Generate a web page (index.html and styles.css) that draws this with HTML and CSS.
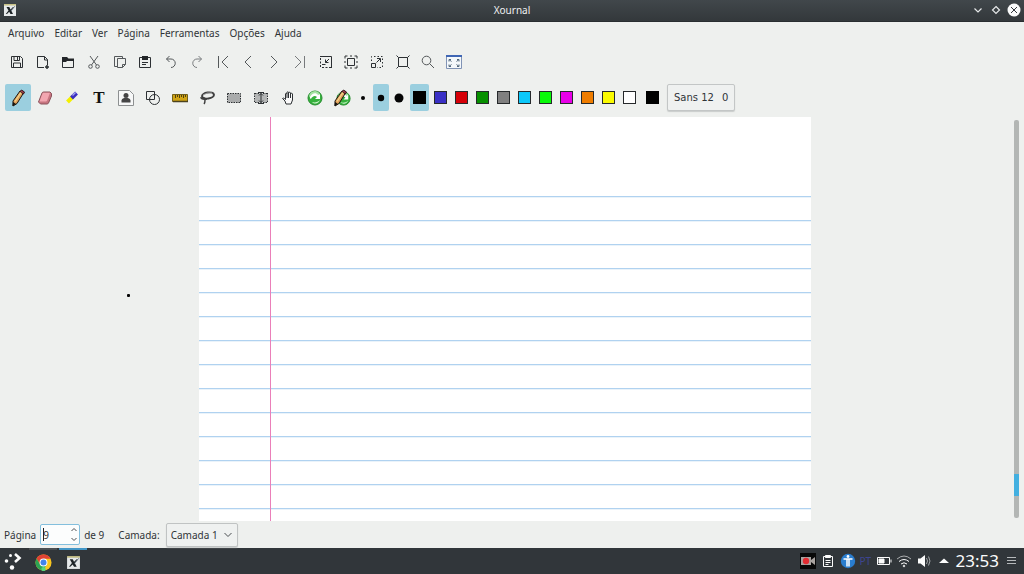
FILE: index.html
```html
<!DOCTYPE html>
<html lang="pt">
<head>
<meta charset="utf-8">
<title>Xournal</title>
<link rel="stylesheet" href="styles.css">
</head>
<body>
<svg class="defs" aria-hidden="true">
  <symbol id="xlogo" viewBox="0 0 14 14"><path d="M1 2h12v11H1z" fill="#e6e9ea"/><path d="M1 1h12v1.500H1z" fill="#c9c388"/><path d="M3.500 4h2.800l1.200 2.400L10 4h1.200L8.200 7.500 10 11H7.500L6.200 8.800 4 11H2.800l2.700-3.500z" fill="#1d2326"/><path d="M8 8l4-5" stroke="#6d7a86" stroke-width=".8"/></symbol>
  <symbol id="pencil" viewBox="0 0 18 18"><path d="M4 12L11 2l3.500 2L8 14.500 4 17z" fill="#dfa15b" stroke="#1c1510"/><path d="M11 2.500l1.500-1.500 3 2-1 2z" fill="#a84350" stroke="#30151a"/><path d="M6 12.500L12 3.500" stroke="#f6d88f" stroke-width="1.200"/><path d="M4 13l3 2-3.500 2z" fill="#17130f"/></symbol>
  <symbol id="green" viewBox="0 0 18 18"><circle cx="9" cy="9" r="7" fill="#35b13c" stroke="#278c30"/><path d="M3 7a6 6 0 0 1 11-2l-3 2-3-1-3 4z" fill="#a6e3a3"/><path d="M4 8c2-4 6-5 8-2l2-1v5H9l2-2C9 6 7 7 4 10z" fill="#fff"/><path d="M6 13c3 1 6 0 8-2-1 3-5 5-8 2z" fill="#d5f5d3"/></symbol>
</svg>

<header class="titlebar">
  <svg class="logo"><use href="#xlogo"/></svg>
  <h1>Xournal</h1>
  <div class="winbuttons">
    <button aria-label="Minimizar"><svg viewBox="0 0 14 14"><path d="M3.500 5.500L7 9l3.500-3.500" class="light"/></svg></button>
    <button aria-label="Maximizar"><svg viewBox="0 0 14 14"><path d="M7 3.500L10.500 7 7 10.500 3.500 7z" class="light"/></svg></button>
    <button aria-label="Fechar"><svg viewBox="0 0 14 14"><circle cx="7" cy="7" r="6.500" fill="#fbfcfc"/><path d="M4 4l6 6M10 4l-6 6" stroke="#31363b" fill="none"/></svg></button>
  </div>
</header>

<nav class="menubar">
  <button>Arquivo</button><button>Editar</button><button>Ver</button><button>Página</button><button>Ferramentas</button><button>Opções</button><button>Ajuda</button>
</nav>

<div class="toolbar main" role="toolbar" aria-label="Principal">
  <button aria-label="Salvar"><svg viewBox="0 0 16 16"><path d="M2.500 2.500h9l2 2v9h-11zM5 2.500v4h5.500v-4M4.500 13.500V9h7v4.500M8.500 3v3"/></svg></button>
  <button aria-label="Novo"><svg viewBox="0 0 16 16"><path d="M9 13.500H2.500v-11h7l3 3V11M9.500 2.500v3.500h3"/><path d="M10 13h4M12 11v4" stroke-width="1.500"/></svg></button>
  <button aria-label="Abrir"><svg viewBox="0 0 16 16"><path d="M2.500 3.500h4l2 2h5v8h-11z"/><path d="M2 3h5l1.500 1.500H14V7H7L6 8H2z" class="solid"/></svg></button>
  <button aria-label="Recortar"><svg viewBox="0 0 16 16" class="thin"><path d="M4 2l6.500 9M12 2l-6.500 9"/><circle cx="4.500" cy="12.500" r="1.800"/><circle cx="11.500" cy="12.500" r="1.800"/></svg></button>
  <button aria-label="Copiar"><svg viewBox="0 0 16 16" class="thin"><path d="M5 12.500H2.500v-10h8v2M5.500 4.500h8v6l-3 3h-5zM13.500 10.500h-3v3"/></svg></button>
  <button aria-label="Colar"><svg viewBox="0 0 16 16"><path d="M2.500 3.500h11v10h-11zM5 8.500h6M5 10.500h4"/><path d="M5 2h6v4H5z" class="solid"/></svg></button>
  <button aria-label="Desfazer"><svg viewBox="0 0 16 16" class="thin"><path d="M6.500 2L3.500 5l3 3M3.500 5H8a4.200 4.200 0 0 1 0 8.500"/></svg></button>
  <button aria-label="Refazer"><svg viewBox="0 0 16 16" class="thin"><path d="M9.500 2l3 3-3 3M12.500 5H8a4.200 4.200 0 0 0 0 8.500" stroke="#7b7e80"/></svg></button>
  <button aria-label="Primeira página"><svg viewBox="0 0 16 16" class="thin"><path d="M3.500 2v12M13 2L7 8l6 6"/></svg></button>
  <button aria-label="Página anterior"><svg viewBox="0 0 16 16" class="thin"><path d="M11 2L5 8l6 6"/></svg></button>
  <button aria-label="Próxima página"><svg viewBox="0 0 16 16" class="thin"><path d="M5 2l6 6-6 6"/></svg></button>
  <button aria-label="Última página"><svg viewBox="0 0 16 16" class="thin"><path d="M12.500 2v12M3 2l6 6-6 6" stroke="#777a7c"/></svg></button>
  <button aria-label="Reduzir"><svg viewBox="0 0 16 16"><path d="M2 2.500h11.500V14"/><path d="M2.500 4v9.500M4 13.500h9" stroke-dasharray="2 1.500"/><path d="M11 5L7.500 8.500M7.500 5.500v3h3M4 10.500h3.500"/></svg></button>
  <button aria-label="Largura da página"><svg viewBox="0 0 16 16"><path d="M4.500 4.500h7v7h-7z"/><path d="M2 4.500V2h2.500M7 2h2M11.500 2H14v2.500M14 7v2M14 11.500V14h-2.500M9 14H7M4.500 14H2v-2.500M2 9V7"/></svg></button>
  <button aria-label="Ampliar"><svg viewBox="0 0 16 16"><path d="M2.500 9.500h4v4h-4z"/><path d="M2.500 7V2.500h11v11H8" stroke-dasharray="1.500 2"/><path d="M7.500 8.500L11 5M8 4.500h3.500V8"/></svg></button>
  <button aria-label="Ajustar"><svg viewBox="0 0 16 16"><path d="M3.500 3.500h9v9h-9zM1.500 1.500l2 2M14.500 1.500l-2 2M1.500 14.500l2-2M14.500 14.500l-2-2"/></svg></button>
  <button aria-label="Zoom"><svg viewBox="0 0 16 16" class="thin"><circle cx="6.500" cy="6.500" r="4.300"/><path d="M9.500 9.500L14 14"/></svg></button>
  <button aria-label="Tela cheia"><svg viewBox="0 0 18 16" class="wide"><path d="M1.500 1.500h15v13h-15z" fill="#f4f8fb" stroke="#8093b5"/><path d="M1 1h16v2H1z" fill="#3f66b4"/><path d="M4 5.500l2.500 2M4 5.500h2M4 5.500v2M14 5.500l-2.500 2M14 5.500h-2M14 5.500v2M4 12.500l2.500-2M4 12.500h2M4 12.500v-2M14 12.500l-2.500-2M14 12.500h-2M14 12.500v-2" stroke="#52687d"/></svg></button>
</div>

<div class="toolbar pens" role="toolbar" aria-label="Ferramentas">
  <div class="tools">
    <button aria-label="Caneta" aria-pressed="true"><svg class="big"><use href="#pencil"/></svg></button>
    <button aria-label="Borracha"><svg class="big" viewBox="0 0 18 18"><path d="M4.500 15L2.500 13 6 4q.5-1 1.500-1H14l1.500 1.500v2.500L12.500 14q-.5 1-1.500 1z" fill="#c77580" stroke="#8a525b"/><path d="M3.500 12.500L6.500 4.500q.3-.8 1.200-.8H14L11 11.700q-.4.800-1.200.8z" fill="#f2a6b0"/></svg></button>
    <button aria-label="Marca-texto"><svg class="big" viewBox="0 0 18 18"><path d="M4.500 13L9.500 8" stroke="#f4f000" stroke-width="4"/><path d="M8.500 9L13.500 4" stroke="#3b30c0" stroke-width="4"/><path d="M9.500 6.500l3-3" stroke="#a0a0ee" stroke-width="1.500"/></svg></button>
    <button aria-label="Texto" class="textglyph">T</button>
    <button aria-label="Imagem"><svg class="big" viewBox="0 0 18 18"><path d="M1.500 1.500h11l4 4v11h-15z" fill="#f7f8f8" stroke="#8d9091"/><circle cx="9" cy="6.500" r="2.500" fill="#454545"/><path d="M4.500 13.500v-2q0-2 2.500-2.500h4q2.500.5 2.500 2.500v2z" fill="#454545"/></svg></button>
    <button aria-label="Formas"><svg viewBox="0 0 16 16"><path d="M1.500 1.500h8v8h-8z"/><circle cx="9.500" cy="9.500" r="5"/></svg></button>
    <button aria-label="Régua"><svg class="big" viewBox="0 0 18 18"><path d="M1.500 5.500h15v7h-15z" fill="#d1a414" stroke="#72601a"/><path d="M2 12.500h15" stroke="#4b421f" stroke-width="1.500"/><path d="M4.500 6v3M6.500 6v2M8.500 6v3M10.500 6v2M12.500 6v3M14.500 6v2" stroke="#4f410e"/></svg></button>
    <button aria-label="Laço"><svg class="big" viewBox="0 0 18 18"><g fill="none" stroke="#3f3f3f" stroke-width="2"><ellipse cx="10" cy="6.500" rx="6" ry="3" transform="rotate(-8 10 6.500)"/><path d="M9 10q-5 1-6-1 4-1 4 2t-1 4" stroke-width="1.500"/></g><path d="M5 6q4-3 9-2" fill="none" stroke="#a9a9a9" stroke-width=".8"/></svg></button>
    <button aria-label="Selecionar retângulo"><svg viewBox="0 0 16 16"><path d="M1.500 3.500h13v9h-13z" fill="#a9abab" stroke-dasharray="1.500 1"/></svg></button>
    <button aria-label="Espaço vertical"><svg viewBox="0 0 16 16"><path d="M2 3.500h12v9H2z" fill="#b4b6b6" stroke="none"/><path d="M1.500 3v10M14.500 3v10M2 3.500h4M10 3.500h4M2 12.500h4M10 12.500h4" stroke-dasharray="1.500 1"/><path d="M5 2.500h6M5 13.500h6M8 3v10M6 5.500l2-2 2 2M6 10.500l2 2 2-2"/></svg></button>
    <button aria-label="Mão"><svg viewBox="0 0 16 16"><path d="M5 11L2.500 8.500c1-1 2 0 3 1V4c0-1 1.500-1 1.500 0V2.500c0-1 1.500-1 1.500 0V3c0-1 2-1 2 0v1c0-1 2-1 2 0v6l-1.500 4H6zM7 4v4M8.500 3v5M10.500 4v4" fill="#fafafa"/></svg></button>
    <button aria-label="Padrão"><svg class="big"><use href="#green"/></svg></button>
    <button aria-label="Caneta padrão"><svg class="big" viewBox="0 0 18 18"><use href="#green" x="2" y="1" width="17" height="17"/><use href="#pencil" x="-2" y="0" width="18" height="18"/></svg></button>
  </div>
  <div class="sizes">
    <button aria-label="Fino"><svg viewBox="0 0 16 16"><circle cx="8" cy="8" r="2" class="dot"/></svg></button>
    <button aria-label="Médio" aria-pressed="true"><svg viewBox="0 0 16 16"><circle cx="8" cy="8" r="3.200" class="dot"/></svg></button>
    <button aria-label="Grosso"><svg viewBox="0 0 16 16"><circle cx="8" cy="8" r="4.500" class="dot"/></svg></button>
  </div>
  <div class="colors">
    <button aria-label="Preto" aria-pressed="true"><i class="swatch black"></i></button>
    <button aria-label="Azul"><i class="swatch blue"></i></button>
    <button aria-label="Vermelho"><i class="swatch red"></i></button>
    <button aria-label="Verde"><i class="swatch green"></i></button>
    <button aria-label="Cinza"><i class="swatch gray"></i></button>
    <button aria-label="Azul claro"><i class="swatch cyan"></i></button>
    <button aria-label="Verde claro"><i class="swatch lime"></i></button>
    <button aria-label="Magenta"><i class="swatch magenta"></i></button>
    <button aria-label="Laranja"><i class="swatch orange"></i></button>
    <button aria-label="Amarelo"><i class="swatch yellow"></i></button>
    <button aria-label="Branco"><i class="swatch white"></i></button>
  </div>
  <button class="picker" aria-label="Cor atual"><i class="swatch black"></i></button>
  <button class="font"><span>Sans 12</span><span>0</span></button>
</div>

<main class="workspace">
  <div class="desk"><div class="paper"></div><i class="penpoint"></i></div>
  <div class="scrollbar"><i class="before"></i><i class="thumb"></i><i class="after"></i></div>
</main>

<footer class="status">
  <label for="page">Página</label>
  <div class="spin">
    <input id="page" type="text" inputmode="numeric" value="9">
    <i class="caret"></i>
    <div class="steps">
      <button aria-label="Aumentar"><svg viewBox="0 0 8 6"><path d="M1.500 4L4 1.500 6.500 4"/></svg></button>
      <button aria-label="Diminuir"><svg viewBox="0 0 8 6"><path d="M1.500 2L4 4.500 6.500 2"/></svg></button>
    </div>
  </div>
  <span class="total">de 9</span>
  <label for="layer">Camada:</label>
  <div class="combo">
    <select id="layer"><option>Camada 1</option></select>
    <svg viewBox="0 0 10 8"><path d="M1.500 2L5 5.500 8.500 2"/></svg>
  </div>
</footer>

<div class="panel">
  <button class="launcher" aria-label="Menu"><svg viewBox="0 0 20 20"><path d="M12 3l4.500 4-4.500 4" fill="none" stroke="#fcfcfc" stroke-width="2.600"/><circle cx="7.500" cy="4.500" r="1.500"/><circle cx="3.500" cy="10" r="1.800"/><circle cx="9" cy="16.500" r="2.200"/></svg></button>
  <button class="task" aria-label="Chrome"><svg viewBox="0 0 18 18"><circle cx="9" cy="9" r="8.500" fill="#f8c51f"/><path d="M1.600 4.800A8.500 8.500 0 0 1 16.500 5H9L5.500 11z" fill="#df4234"/><path d="M1.600 4.800A8.500 8.500 0 0 0 8.500 17.500L12.500 11H5.500z" fill="#2ca454"/><circle cx="9" cy="9" r="4.200" fill="#fff"/><circle cx="9" cy="9" r="3.200" fill="#4184ed"/><circle cx="9" cy="16" r="2.300" fill="#58d67d"/></svg></button>
  <button class="task current" aria-label="Xournal"><svg><use href="#xlogo"/></svg></button>
  <div class="tray">
    <svg viewBox="0 0 16 16"><path d="M0 0h16v16H0z" fill="#080808"/><path d="M1 4h10v8H1zM11 7l4-3v8l-4-3z" fill="#a9a3a0"/><circle cx="6" cy="8" r="3.200" fill="#e32c32"/></svg>
    <svg viewBox="0 0 16 16" class="line"><path d="M3.500 3.500h9v10h-9zM5.500 7.500h5M5.500 9.500h5M5.500 11.500h3"/><path d="M5.500 2.500h5v2h-5z" fill="#fcfcfc"/></svg>
    <svg viewBox="0 0 16 16"><circle cx="8" cy="8" r="7.200" fill="#2a7dce"/><circle cx="8" cy="3.500" r="1.400" fill="#fff"/><path d="M3.500 6h9M7 6v7.500M9 6v7.500" stroke="#fff" stroke-width="1.500"/></svg>
    <span class="lang">PT</span>
    <svg viewBox="0 0 16 16" class="line"><path d="M1.500 4.500h12v7h-12zM15 6.500v3"/><path d="M3 6h5v4H3z" fill="#fcfcfc"/></svg>
    <svg viewBox="0 0 16 16" class="line"><path d="M1 6q7-6 14 0" opacity=".6"/><path d="M3 8.500q5-4 10 0M5 11q3-2.500 6 0"/><circle cx="8" cy="13" r=".8"/></svg>
    <svg viewBox="0 0 16 16"><path d="M2 5.500h2.500L9 2v12l-4.500-3.500H2z" fill="#fcfcfc"/><path d="M10.500 5q2 3 0 6M12.500 3.500q3 4.500 0 9" stroke="#a2a5a7" fill="none"/></svg>
    <svg viewBox="0 0 16 16"><path d="M3 10l5-4.500 5 4.500z" fill="#fcfcfc"/></svg>
    <time>23:53</time>
    <button aria-label="Opções do painel"><svg viewBox="0 0 12 16" class="line"><path d="M1 4.500h9M1 7.500h9M1 10.500h9" stroke="#b6b9bb"/></svg></button>
  </div>
</div>
</body>
</html>
```
FILE: styles.css
```css
* { box-sizing: border-box; }

body {
  margin: 0;
  height: 100vh;
  display: flex;
  flex-direction: column;
  overflow: hidden;
  background: #eef0ee;
  color: #303437;
  font: 10px/16px "Noto Sans", sans-serif;
}

button, input, select { font: inherit; color: inherit; }

button {
  display: flex;
  align-items: center;
  justify-content: center;
  padding: 0;
  border: 0;
  background: none;
}

svg { display: block; flex: none; }
.defs { position: absolute; width: 0; height: 0; }

/* Window title */
.titlebar {
  display: grid;
  grid-template-columns: 1fr auto 1fr;
  align-items: center;
  height: 22px;
  padding: 0 3px 1px;
  border-bottom: 1px solid #292d30;
  background: linear-gradient(#41474b, #33383b);
  color: #eff0f1;
}
.titlebar h1 { margin: 0; font-size: 10px; font-weight: 400; line-height: 16px; }
.logo { width: 14px; height: 14px; }
.winbuttons { display: flex; justify-content: flex-end; gap: 4px; }
.winbuttons svg { width: 14px; height: 14px; }
.light { fill: none; stroke: #e6e8e9; stroke-width: 1.2; }

/* Menus */
.menubar { display: flex; gap: 10px; height: 23px; padding: 0 8px 2px; align-items: center; }

/* Toolbars */
.toolbar svg { width: 16px; height: 16px; fill: none; stroke: #2c3033; }
.toolbar .thin { stroke: #54585a; }
.toolbar .solid { fill: #232629; stroke: none; }
.toolbar .big { width: 18px; height: 18px; stroke: none; }
.toolbar .wide { width: 18px; stroke: none; }
.toolbar .dot { fill: #050505; stroke: none; }
.toolbar [aria-pressed="true"] { background: #9bcfdf; border-radius: 2px; }

.main {
  display: grid;
  grid-template-columns: repeat(18, 1fr);
  width: 463px;
  height: 33px;
  margin-left: 4px;
}

.pens { display: flex; align-items: center; height: 39px; padding: 0 5px; }
.tools { display: flex; gap: 1px; }
.tools button { width: 26px; height: 27px; }
.tools .textglyph { font: bold 17px/20px "Liberation Serif", serif; color: #111; }
.sizes { display: flex; gap: 2px; margin-right: 3px; }
.sizes button { width: 16px; height: 27px; }
.colors { display: flex; gap: 2px; margin-right: 7px; }
.colors button { width: 19px; height: 27px; }
.swatch { width: 13px; height: 13px; border: 1px solid #26292b; }
.picker { margin-right: 8px; }
.black { background: #000; border-color: #000; }
.blue { background: #3a30c5; }
.red { background: #d60008; }
.green { background: #079000; }
.gray { background: #808080; }
.cyan { background: #0cc8fa; }
.lime { background: #08fa08; }
.magenta { background: #e800e8; }
.orange { background: #ef7d00; }
.yellow { background: #fbfb00; }
.white { background: #fff; }

.font {
  gap: 8px;
  height: 27px;
  padding: 0 6px;
  border: 1px solid #c3c6c6;
  border-radius: 2px;
  background: #eff1f0;
  box-shadow: 0 1px 1px #c9cccb;
  font: 10px/16px "DejaVu Sans", sans-serif;
}

/* Page area */
.workspace { flex: 1; display: flex; min-height: 0; }
.desk { position: relative; flex: 1; display: flex; justify-content: center; }
.paper {
  width: 612px;
  background:
    linear-gradient(#ea7fb9, #ea7fb9) 71px 0 / 1px 100% no-repeat,
    repeating-linear-gradient(#b0d2f0 0 1px, #eaf3fa 1px 2px, transparent 2px 24px) 0 79px / 100% 100% no-repeat,
    #fff;
}
.penpoint {
  position: absolute;
  left: 127px;
  top: 177px;
  width: 3px;
  height: 3px;
  border-radius: 1px;
  background: #050505;
}
.scrollbar { display: flex; flex-direction: column; width: 14px; padding: 3px 5px 3px 4px; }
.before { flex: 354; background: #b3b6b4; border-radius: 2px 2px 0 0; }
.thumb { flex: 22; background: #43b0e0; }
.after { flex: 22; background: #b3b6b4; border-radius: 0 0 2px 2px; }

/* Status line */
.status { display: flex; align-items: center; height: 27px; padding: 0 4px; }
.status svg { fill: none; stroke: #4a4e51; }
.spin {
  position: relative;
  display: flex;
  width: 40px;
  height: 21px;
  margin: 0 4px;
  border: 1px solid #83bfdd;
  border-radius: 2px;
  background: #fcfdfd;
}
.spin input { width: 29px; padding: 0 0 0 2px; border: 0; outline: 0; background: none; }
.caret { position: absolute; left: 2px; top: 3px; width: 1px; height: 13px; background: #202326; }
.steps { display: flex; flex-direction: column; justify-content: space-evenly; }
.steps svg { width: 8px; height: 6px; }
.total { margin-right: 14px; }
.combo { position: relative; display: flex; margin-left: 6px; }
.combo select {
  appearance: none;
  width: 72px;
  height: 24px;
  padding: 0 0 0 4px;
  border: 1px solid #c0c3c3;
  border-radius: 2px;
  background: #eff1f0;
  box-shadow: 0 1px 1px #c9cccb;
}
.combo svg { position: absolute; right: 5px; top: 8px; width: 10px; height: 8px; pointer-events: none; }

/* Desktop panel */
.panel { display: flex; height: 26px; background: #31363a; color: #fcfcfc; }
.launcher { width: 29px; justify-content: flex-start; padding-left: 3px; }
.launcher svg { width: 20px; height: 20px; fill: #fcfcfc; }
.task { width: 28px; margin-right: 2px; border-top: 2px solid #4b5054; }
.task svg { width: 17px; height: 17px; }
.current { border-top-color: #4397c7; }
.current svg { width: 15px; height: 15px; }
.tray { display: flex; align-items: center; gap: 4px; margin-left: auto; padding-right: 6px; }
.tray svg { width: 16px; height: 16px; }
.tray .line { fill: none; stroke: #fcfcfc; }
.lang { width: 12px; color: #3d4590; }
.tray time { margin-right: 3px; font-size: 17px; line-height: 24px; }
.tray button svg { width: 12px; }
```
